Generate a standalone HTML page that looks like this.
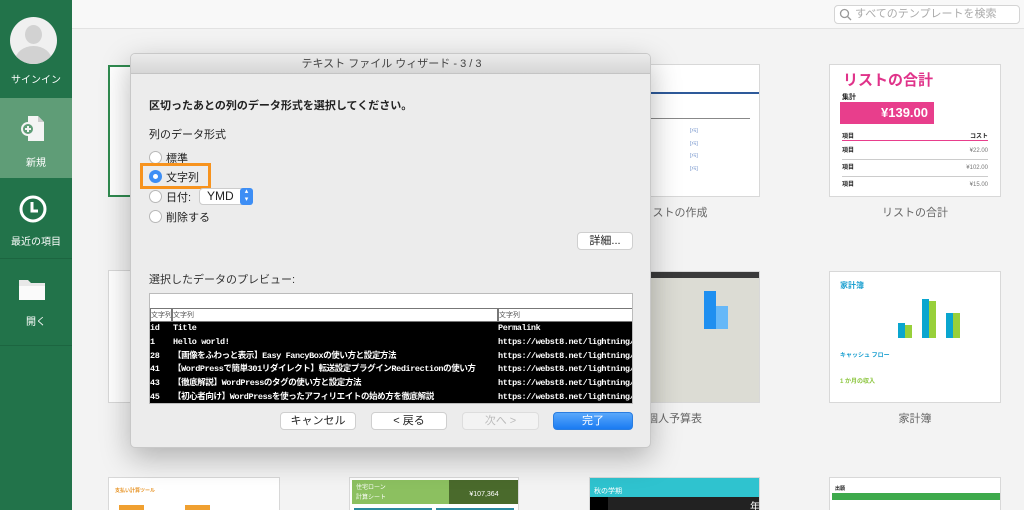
<!DOCTYPE html>
<html><head><meta charset="utf-8"><style>
*{margin:0;padding:0;box-sizing:border-box}
html,body{width:1024px;height:510px;overflow:hidden}
body{background:#f3f3f3;font-family:"Liberation Sans","Noto Sans CJK JP",sans-serif;position:relative;font-size:11px;color:#222}
.a{position:absolute}
#side{left:0;top:0;width:72px;height:510px;background:#22734a}
.sl{color:#fff;font-size:10px;text-align:center;width:72px;left:0}
.th{background:#fff;border:1px solid #d8d8d8;overflow:hidden}
.lbl{color:#666;font-size:11px;text-align:center}
.btn{background:#fff;border:1px solid #cfcfcf;border-radius:4px;text-align:center;font-size:11px;line-height:16px;height:18px}
.rd{width:13px;height:13px;border-radius:50%;background:#fff;border:1px solid #b8b8b8}
.row{left:0;height:13.8px;color:#fff;font-family:"Liberation Mono","Noto Sans CJK JP",monospace;font-size:8.5px;font-weight:bold;line-height:13.8px;white-space:nowrap;letter-spacing:-0.4px;overflow:hidden}
</style></head><body>
<div id="side" class="a">
 <div class="a" style="left:10px;top:17px;width:47px;height:47px;border-radius:50%;background:#f0f0f0;overflow:hidden">
  <div class="a" style="left:15px;top:8px;width:17px;height:19px;border-radius:50%;background:#d2d2d2"></div>
  <div class="a" style="left:5px;top:29px;width:37px;height:30px;border-radius:50%;background:#d2d2d2"></div>
 </div>
 <div class="a sl" style="top:71px">サインイン</div>
 <div class="a" style="left:0;top:98px;width:72px;height:80px;background:#5f9d77"></div>
 <svg class="a" style="left:21px;top:114px" width="26" height="30"><path d="M7 2h10l6 6v19H7z" fill="#f4f4f4"/><path d="M17 2v6h6" fill="#ccc"/><circle cx="7" cy="15" r="6" fill="#5f9d77" stroke="#f4f4f4" stroke-width="2"/><path d="M4 15h6M7 12v6" stroke="#f4f4f4" stroke-width="2"/></svg>
 <div class="a sl" style="top:154px">新規</div>
 <svg class="a" style="left:18px;top:194px" width="30" height="30"><circle cx="15" cy="15" r="12" fill="none" stroke="#fff" stroke-width="3"/><path d="M14 8v9h6" fill="none" stroke="#fff" stroke-width="3"/></svg>
 <div class="a sl" style="top:233px">最近の項目</div>
 <div class="a" style="left:0;top:258px;width:72px;height:1px;background:#1c6540"></div>
 <svg class="a" style="left:18px;top:277px" width="28" height="24"><path d="M1 3h9l3 3h14v17H1z" fill="#e8e8e8"/><path d="M1 9h26v14H1z" fill="#fafafa"/></svg>
 <div class="a sl" style="top:313px">開く</div>
 <div class="a" style="left:0;top:345px;width:72px;height:1px;background:#1c6540"></div>
</div>
<div class="a" style="left:72px;top:0;width:952px;height:29px;background:#f8f8f8;border-bottom:1px solid #e2e2e2"></div>
<div class="a" style="left:834px;top:5px;width:186px;height:19px;background:#fff;border:1px solid #d4d4d4;border-radius:4px;color:#aaa;font-size:11px;line-height:17px;padding-left:20px">すべてのテンプレートを検索</div>
<svg class="a" style="left:839px;top:8px" width="13" height="13"><circle cx="5.5" cy="5.5" r="4" fill="none" stroke="#999" stroke-width="1.3"/><path d="M8.5 8.5l3.5 3.5" stroke="#999" stroke-width="1.3"/></svg>

<div class="a th" style="left:108px;top:65px;width:172px;height:132px;border:2px solid #2f8a4f"></div>
<div class="a th" style="left:589px;top:64px;width:171px;height:133px">
 <div class="a" style="left:0;top:27px;width:171px;height:2px;background:#2e5a9a"></div>
 <div class="a" style="left:0;top:53px;width:160px;height:1px;background:#888"></div>
 <div class="a" style="left:100px;top:60px;color:#6a8cc8;font-size:5px;line-height:12.6px">[ﾒﾓ]<br>[ﾒﾓ]<br>[ﾒﾓ]<br>[ﾒﾓ]</div>
</div>
<div class="a lbl" style="left:589px;top:204px;width:171px">リストの作成</div>
<div class="a th" style="left:829px;top:64px;width:172px;height:133px">
 <div class="a" style="left:13px;top:4px;color:#e0338a;font-size:15px;font-weight:bold">リストの合計</div>
 <div class="a" style="left:12px;top:27px;font-size:7px;font-weight:bold">集計</div>
 <div class="a" style="left:10px;top:37px;width:94px;height:22px;background:#e83e8c;color:#fff;font-weight:bold;font-size:13px;line-height:22px;text-align:right;padding-right:6px">¥139.00</div>
 <div class="a" style="left:12px;top:66px;width:146px;font-size:6px;font-weight:bold;border-bottom:1px solid #e83e8c">項目<span style="float:right">コスト</span></div>
 <div class="a" style="left:12px;top:78px;width:146px;font-size:6px;line-height:16px"><div style="border-bottom:1px solid #ccc"><b>項目</b><span style="float:right;color:#777">¥22.00</span></div><div style="border-bottom:1px solid #ccc"><b>項目</b><span style="float:right;color:#777">¥102.00</span></div><div><b>項目</b><span style="float:right;color:#777">¥15.00</span></div></div>
</div>
<div class="a lbl" style="left:829px;top:204px;width:172px">リストの合計</div>

<div class="a th" style="left:108px;top:270px;width:172px;height:133px"></div>
<div class="a th" style="left:589px;top:271px;width:171px;height:132px;background:#dcdcd4">
 <div class="a" style="left:0;top:0;width:171px;height:6px;background:#3a3a3a"></div>
 <div class="a" style="left:10px;top:18px;color:#333;font-size:5px;line-height:13px">¥375,000<br>¥233,600<br>¥55,000<br>¥86,400</div>
 <div class="a" style="left:114px;top:19px;width:12px;height:38px;background:#1e8ff0"></div>
 <div class="a" style="left:126px;top:34px;width:12px;height:23px;background:#66b8f8"></div>
</div>
<div class="a lbl" style="left:589px;top:410px;width:171px">個人予算表</div>
<div class="a th" style="left:829px;top:271px;width:172px;height:132px">
 <div class="a" style="left:10px;top:8px;color:#1a9fd0;font-size:8px;font-weight:bold">家計簿</div>
 <div class="a" style="left:68px;top:51px;width:7px;height:15px;background:#0aa6cf"></div><div class="a" style="left:75px;top:53px;width:7px;height:13px;background:#98d03a"></div>
 <div class="a" style="left:92px;top:27px;width:7px;height:39px;background:#0aa6cf"></div><div class="a" style="left:99px;top:29px;width:7px;height:37px;background:#98d03a"></div>
 <div class="a" style="left:116px;top:41px;width:7px;height:25px;background:#0aa6cf"></div><div class="a" style="left:123px;top:41px;width:7px;height:25px;background:#98d03a"></div>
 <div class="a" style="left:10px;top:78px;color:#1a9fd0;font-size:6px;font-weight:bold">キャッシュ フロー</div>
 <div class="a" style="left:10px;top:104px;color:#8cc63f;font-size:6px;font-weight:bold">1 か月の収入</div>
</div>
<div class="a lbl" style="left:829px;top:410px;width:172px">家計簿</div>

<div class="a th" style="left:108px;top:477px;width:172px;height:40px"><div class="a" style="left:6px;top:9px;color:#e8962a;font-size:5px;font-weight:bold">支払い計算ツール</div><div class="a" style="left:10px;top:27px;width:25px;height:8px;background:#f0a030"></div><div class="a" style="left:76px;top:27px;width:25px;height:8px;background:#f0a030"></div></div>
<div class="a th" style="left:349px;top:477px;width:170px;height:40px"><div class="a" style="left:2px;top:2px;width:97px;height:24px;background:#8cc060;color:#fff;font-size:6px;padding:3px 4px;line-height:10px">住宅ローン<br>計算シート</div><div class="a" style="left:99px;top:2px;width:70px;height:24px;background:#4a6a2c;color:#fff;font-size:7px;text-align:center;padding-top:11px">¥107,364</div><div class="a" style="left:4px;top:30px;width:78px;height:10px;background:#2a8aa0"></div><div class="a" style="left:86px;top:30px;width:78px;height:10px;background:#2a8aa0"></div></div>
<div class="a th" style="left:589px;top:477px;width:171px;height:40px;background:#222"><div class="a" style="left:0;top:0;width:171px;height:19px;background:#2fc3cf;color:#fff;font-size:7px;padding:8px 4px">秋の学期</div><div class="a" style="left:0;top:19px;width:18px;height:20px;background:#000"></div><div class="a" style="left:160px;top:20px;color:#fff;font-size:10px">年</div></div>
<div class="a th" style="left:829px;top:477px;width:172px;height:40px"><div class="a" style="left:5px;top:7px;font-size:5px;font-weight:bold">出願</div><div class="a" style="left:2px;top:15px;width:168px;height:7px;background:#3eaa4c"></div></div>

<div class="a" style="left:130px;top:53px;width:521px;height:395px;background:#ececec;border:1px solid #c8c8c8;border-radius:5px;box-shadow:0 10px 30px rgba(0,0,0,.28);overflow:hidden">
 <div class="a" style="left:0;top:0;width:521px;height:20px;background:linear-gradient(#ebebeb,#d6d6d6);border-bottom:1px solid #c4c4c4;text-align:center;color:#444;font-size:11px;line-height:20px">テキスト ファイル ウィザード - 3 / 3</div>
 <div class="a" style="left:18px;top:43px;font-weight:bold;font-size:11px">区切ったあとの列のデータ形式を選択してください。</div>
 <div class="a" style="left:18px;top:72px">列のデータ形式</div>
 <div class="a rd" style="left:18px;top:97px"></div><div class="a" style="left:35px;top:96px">標準</div>
 <div class="a" style="left:18px;top:116px;width:13px;height:13px;border-radius:50%;background:#3d8ef5"><div class="a" style="left:4px;top:4px;width:5px;height:5px;border-radius:50%;background:#fff"></div></div><div class="a" style="left:35px;top:115px">文字列</div>
 <div class="a" style="left:9px;top:109px;width:71px;height:26px;border:3px solid #f7931e"></div>
 <div class="a rd" style="left:18px;top:136px"></div><div class="a" style="left:35px;top:135px">日付:</div>
 <div class="a" style="left:68px;top:134px;width:54px;height:17px;background:#fff;border:1px solid #ccc;border-radius:4px;line-height:15px;padding-left:7px;font-size:12px">YMD</div>
 <div class="a" style="left:109px;top:134px;width:13px;height:17px;background:#3d8ef5;border-radius:3px;color:#fff;font-size:7px;line-height:8px;text-align:center">▴<br>▾</div>
 <div class="a rd" style="left:18px;top:156px"></div><div class="a" style="left:35px;top:155px">削除する</div>
 <div class="a btn" style="left:446px;top:178px;width:56px">詳細...</div>
 <div class="a" style="left:18px;top:217px;color:#333">選択したデータのプレビュー:</div>
 <div class="a" style="left:18px;top:239px;width:484px;height:111px;background:#000;border:1px solid #bbb;overflow:hidden">
  <div class="a" style="left:0;top:0;width:484px;height:14px;background:#fff"></div>
  <div class="a" style="left:0;top:14px;width:484px;height:14px;background:#fff;font-size:7px;color:#555;line-height:13px">
   <div class="a" style="left:0;top:0;width:22px;height:14px;border:1px solid #777;overflow:hidden;white-space:nowrap">文字列</div>
   <div class="a" style="left:22px;top:0;width:326px;height:14px;border:1px solid #777">文字列</div>
   <div class="a" style="left:348px;top:0;width:135px;height:14px;border:1px solid #777">文字列</div>
  </div>
  <div class="a" style="left:0;top:28px;width:484px">
   <div class="row" style="position:relative"><span class="a" style="left:0">id</span><span class="a" style="left:23px">Title</span><span class="a" style="left:348px">Permalink</span></div>
   <div class="row" style="position:relative"><span class="a" style="left:0">1</span><span class="a" style="left:23px">Hello world!</span><span class="a" style="left:348px">https://webst8.net/lightning/2</span></div>
   <div class="row" style="position:relative"><span class="a" style="left:0">28</span><span class="a" style="left:23px">【画像をふわっと表示】Easy FancyBoxの使い方と設定方法</span><span class="a" style="left:348px;background:#000">https://webst8.net/lightning/2</span></div>
   <div class="row" style="position:relative"><span class="a" style="left:0">41</span><span class="a" style="left:23px;width:324px;overflow:hidden">【WordPressで簡単301リダイレクト】転送設定プラグインRedirectionの使い方</span><span class="a" style="left:348px;background:#000">https://webst8.net/lightning/2</span></div>
   <div class="row" style="position:relative"><span class="a" style="left:0">43</span><span class="a" style="left:23px">【徹底解説】WordPressのタグの使い方と設定方法</span><span class="a" style="left:348px">https://webst8.net/lightning/2</span></div>
   <div class="row" style="position:relative"><span class="a" style="left:0">45</span><span class="a" style="left:23px">【初心者向け】WordPressを使ったアフィリエイトの始め方を徹底解説</span><span class="a" style="left:348px;background:#000">https://webst8.net/lightning/2</span></div>
  </div>
 </div>
 <div class="a btn" style="left:149px;top:358px;width:76px">キャンセル</div>
 <div class="a btn" style="left:240px;top:358px;width:76px">&lt; 戻る</div>
 <div class="a btn" style="left:331px;top:358px;width:77px;background:#f3f3f3;color:#bbb;border-color:#ddd">次へ &gt;</div>
 <div class="a btn" style="left:422px;top:358px;width:80px;background:linear-gradient(#5aa8fb,#1a7bf2);border-color:#2a7de0;color:#fff">完了</div>
</div>
</body></html>
